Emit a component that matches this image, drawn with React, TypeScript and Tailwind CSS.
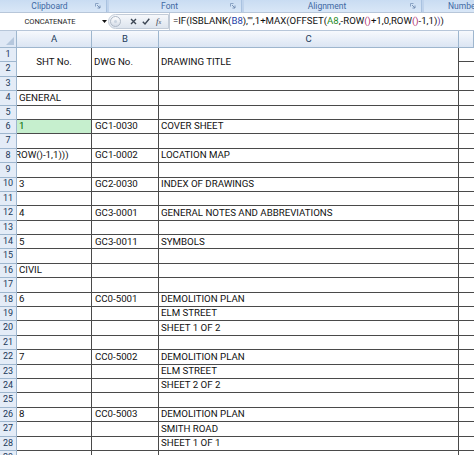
import React from "react";

type Row = { n: number; a?: string; b?: string; c?: string; good?: boolean; editing?: boolean };

const rows: Row[] = [
  { n: 3 },
  { n: 4, a: "GENERAL" },
  { n: 5 },
  { n: 6, a: "1", b: "GC1-0030", c: "COVER SHEET", good: true },
  { n: 7 },
  { n: 8, editing: true, b: "GC1-0002", c: "LOCATION MAP" },
  { n: 9 },
  { n: 10, a: "3", b: "GC2-0030", c: "INDEX OF DRAWINGS" },
  { n: 11 },
  { n: 12, a: "4", b: "GC3-0001", c: "GENERAL NOTES AND ABBREVIATIONS" },
  { n: 13 },
  { n: 14, a: "5", b: "GC3-0011", c: "SYMBOLS" },
  { n: 15 },
  { n: 16, a: "CIVIL" },
  { n: 17 },
  { n: 18, a: "6", b: "CC0-5001", c: "DEMOLITION PLAN" },
  { n: 19, c: "ELM STREET" },
  { n: 20, c: "SHEET 1 OF 2" },
  { n: 21 },
  { n: 22, a: "7", b: "CC0-5002", c: "DEMOLITION PLAN" },
  { n: 23, c: "ELM STREET" },
  { n: 24, c: "SHEET 2 OF 2" },
  { n: 25 },
  { n: 26, a: "8", b: "CC0-5003", c: "DEMOLITION PLAN" },
  { n: 27, c: "SMITH ROAD" },
  { n: 28, c: "SHEET 1 OF 1" },
  { n: 29 },
];

const cell = "h-full border-r border-b border-[#4a4a4a] flex items-center overflow-hidden whitespace-nowrap";

function RowHead({ n }: { n: number }) {
  return (
    <div className="w-[17px] shrink-0 h-full flex items-center justify-center bg-[#e4ecf7] border-r border-b border-[#9eb6ce] text-[9px] text-[#22395a]">
      {n}
    </div>
  );
}

function Formula() {
  return (
    <>
      =IF(ISBLANK(<span className="text-[#1d3fa8]">B8</span>),"",1+MAX(OFFSET(
      <span className="text-[#1f8a1f]">A8</span>,-ROW<span className="text-[#b0306f]">()</span>+1,0,ROW
      <span className="text-[#b0306f]">()</span>-1,1)<span className="text-[#6b3fa0]">)</span>)
    </>
  );
}

function Launcher() {
  return (
    <svg className="mr-[5px] shrink-0" width="6" height="6" viewBox="0 0 6 6">
      <path d="M0.5 0.5h3M0.5 0.5v3" stroke="#8aa3c4" strokeWidth="1" fill="none" />
      <path d="M2 2l3 3M5 2.5V5H2.5" stroke="#6f8bb0" strokeWidth="0.9" fill="none" />
    </svg>
  );
}

function Group({ label, w, pad }: { label: string; w: string; pad: string }) {
  return (
    <div className={`${w} shrink-0 h-full flex items-center bg-gradient-to-b from-[#c9dcf2] to-[#d9e7f7] border-r border-[#a9c2e0]`}>
      <div className={`flex-1 flex justify-center ${pad} text-[8.5px] text-[#4068a3]`}>{label}</div>
      <Launcher />
    </div>
  );
}

export default function App() {
  return (
    <div className="w-[474px] h-[455px] overflow-hidden bg-white font-['Roboto',sans-serif] select-none">
      {/* ribbon group labels */}
      <div className="flex h-[12px] bg-[#bfd3ec]">
        <Group label="Clipboard" w="w-[107px]" pad="pl-[4px]" />
        <div className="w-[2px] shrink-0" />
        <Group label="Font" w="w-[133px]" pad="pl-[0px]" />
        <div className="w-[2px] shrink-0" />
        <Group label="Alignment" w="w-[178px]" pad="pl-[0px]" />
        <div className="w-[2px] shrink-0" />
        <div className="flex-1 h-full flex items-center bg-gradient-to-b from-[#c9dcf2] to-[#d9e7f7] pl-[24px] text-[8.5px] text-[#4068a3] whitespace-nowrap overflow-hidden">
          Number
        </div>
      </div>

      {/* formula bar */}
      <div className="flex h-[19px] items-center bg-white border-t border-b border-[#b7c6d9]">
        <div className="w-[100px] h-full flex items-center justify-center text-[7.5px] text-[#1e1e1e] tracking-[-0.1px]">
          CONCATENATE
        </div>
        <div className="w-[8px] h-full flex items-center justify-center">
          <svg width="5" height="3" viewBox="0 0 5 3">
            <path d="M0 0h5L2.5 3z" fill="#111" />
          </svg>
        </div>
        <div className="w-[61px] h-[15px] flex items-center rounded-l-full bg-gradient-to-b from-[#f6f8fb] to-[#dde4ee] border border-[#c3ccd8]">
          <div className="w-[11px] h-[11px] ml-[1px] rounded-full border border-[#aeb8c6] bg-gradient-to-b from-white to-[#d4dce8] flex items-center justify-center">
            <div className="w-[3px] h-[3px] rounded-full bg-[#c9d3e0]" />
          </div>
          <svg className="ml-[9px]" width="7" height="7" viewBox="0 0 7 7">
            <path d="M1 1l5 5M6 1L1 6" stroke="#3c4654" strokeWidth="1.4" />
          </svg>
          <svg className="ml-[5px]" width="8" height="7" viewBox="0 0 8 7">
            <path d="M0.8 3.8L3 6L7.3 0.8" stroke="#3c4654" strokeWidth="1.4" fill="none" />
          </svg>
          <div className="ml-[6px] font-['Liberation_Serif',serif] italic text-[9px] text-[#3c4654] leading-none">
            f<span className="text-[6px]">x</span>
          </div>
        </div>
        <div className="flex-1 h-full flex items-center pl-[3px] border-l border-[#c3ccd8] text-[9.6px] text-[#111] whitespace-nowrap overflow-hidden">
          <Formula />
        </div>
      </div>

      {/* column headers */}
      <div className="flex h-[17px] text-[9.5px] text-[#22395a]">
        <div className="w-[17px] shrink-0 h-full bg-[#dfe8f5] border-r border-b border-[#9eb6ce] relative">
          <div className="absolute right-[2px] bottom-[2px] w-0 h-0 border-l-[8px] border-l-transparent border-b-[8px] border-b-[#b5c7dd]" />
        </div>
        {[
          ["A", "w-[75px]"],
          ["B", "w-[67px]"],
          ["C", "w-[300px]"],
          ["", "flex-1"],
        ].map(([l, w]) => (
          <div
            key={w}
            className={`${w} shrink-0 h-full flex items-center justify-center bg-gradient-to-b from-[#f7f9fd] to-[#dbe5f3] border-r border-b border-[#9eb6ce]`}
          >
            {l}
          </div>
        ))}
      </div>

      <div className="text-[9.7px] text-[#111]">
        {/* rows 1-2 merged */}
        <div className="flex h-[28.8px]">
          <div className="w-[17px] shrink-0 flex flex-col">
            <div className="h-[14.4px]"><RowHead n={1} /></div>
            <div className="h-[14.4px]"><RowHead n={2} /></div>
          </div>
          <div className={`${cell} w-[75px] justify-center`}>SHT No.</div>
          <div className={`${cell} w-[67px] pl-[2px]`}>DWG No.</div>
          <div className={`${cell} w-[300px] pl-[2px]`}>DRAWING TITLE</div>
          <div className="flex-1 flex flex-col">
            <div className="h-[14.4px] border-b border-[#4a4a4a]" />
            <div className="h-[14.4px] border-b border-[#4a4a4a]" />
          </div>
        </div>

        {rows.map((r) => (
          <div key={r.n} className="flex h-[14.4px]">
            <RowHead n={r.n} />
            {r.editing ? (
              <div className={`${cell} w-[75px]`}>
                <span className="ml-[-2px]">ROW()-1,1)))</span>
              </div>
            ) : (
              <div
                className={`${cell} w-[75px] pl-[2px] ${r.good ? "bg-[#c6efce] text-[#006100]" : ""}`}
              >
                {r.a}
              </div>
            )}
            <div className={`${cell} w-[67px] pl-[3px]`}>{r.b}</div>
            <div className={`${cell} w-[300px] pl-[2px]`}>{r.c}</div>
            <div className="flex-1 h-full border-b border-[#4a4a4a]" />
          </div>
        ))}
      </div>
    </div>
  );
}
